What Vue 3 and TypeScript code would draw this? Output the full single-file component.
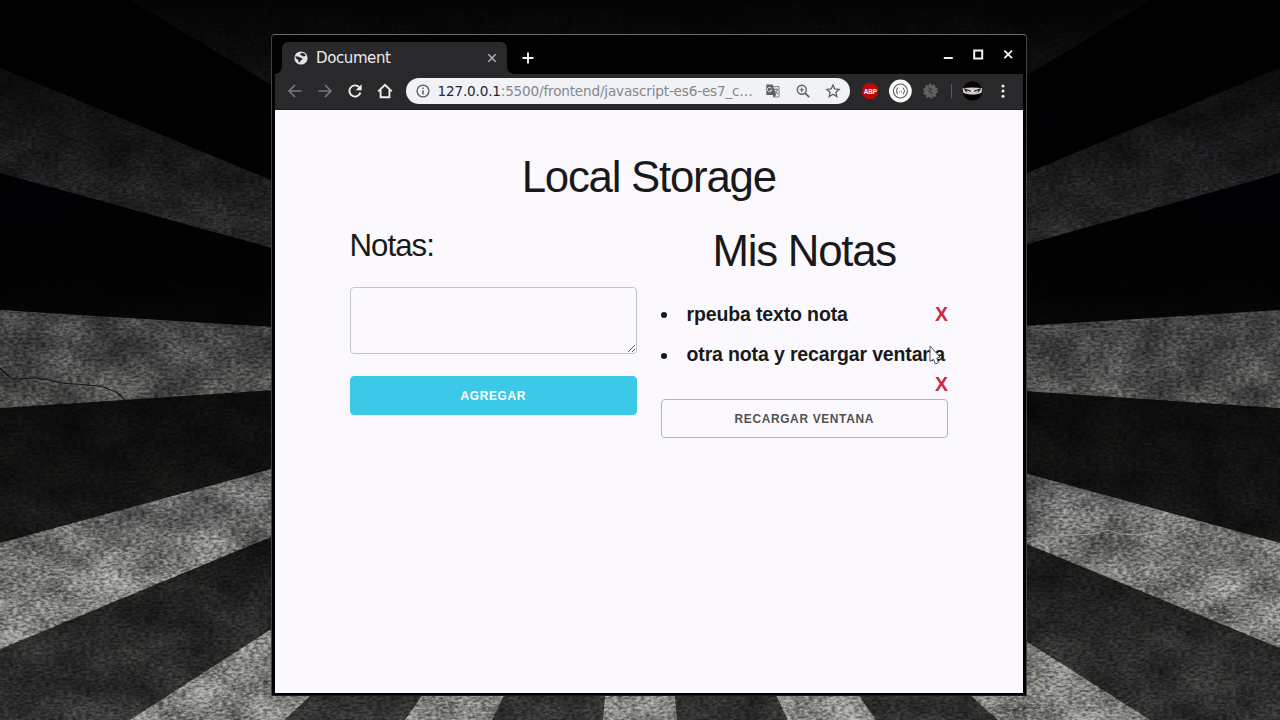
<script setup lang="ts">
import { ref } from 'vue'

interface Note {
  id: number
  text: string
}

const notes = ref<Note[]>([
  { id: 1, text: 'rpeuba texto nota' },
  { id: 2, text: 'otra nota y recargar ventana' },
])
const draft = ref('')

function addNote(): void {
  const text = draft.value.trim()
  if (!text) return
  notes.value.push({ id: Date.now(), text })
  draft.value = ''
}

function removeNote(id: number): void {
  notes.value = notes.value.filter((n) => n.id !== id)
}

const lightRays: string[] = [
  '130,0 290,96 1010,86 1150,0',
  '0,68 290,188 290,253 0,173',
  '0,310 290,328 290,389 0,408',
  '0,543 290,464 290,529 0,649',
  '130,720 290,617 320,687 284,720',
  '405,720 428,687 508,687 492,720',
  '603,720 606,687 674,687 677,720',
  '788,720 772,687 853,687 876,720',
  '998,720 961,687 1010,631 1150,720',
  '1280,68 1010,180 1010,249 1280,173',
  '1280,310 1010,327 1010,390 1280,408',
  '1280,543 1010,469 1010,537 1280,648',
]
</script>

<template>
  <div class="desktop">
    <svg class="wallpaper" width="1280" height="720" viewBox="0 0 1280 720">
      <defs>
        <linearGradient id="light" gradientUnits="userSpaceOnUse" x1="0" y1="0" x2="0" y2="720">
          <stop offset="0" stop-color="#030304" />
          <stop offset="0.12" stop-color="#0e0e10" />
          <stop offset="0.25" stop-color="#1c1c1e" />
          <stop offset="0.34" stop-color="#29292b" />
          <stop offset="0.46" stop-color="#424242" />
          <stop offset="0.56" stop-color="#4e4e4c" />
          <stop offset="0.7" stop-color="#666665" />
          <stop offset="0.85" stop-color="#7f7f7b" />
          <stop offset="1" stop-color="#81817c" />
        </linearGradient>
        <linearGradient id="dark" gradientUnits="userSpaceOnUse" x1="0" y1="0" x2="0" y2="720">
          <stop offset="0" stop-color="#000000" />
          <stop offset="0.38" stop-color="#010103" />
          <stop offset="0.6" stop-color="#0e0e0d" />
          <stop offset="0.75" stop-color="#161615" />
          <stop offset="0.88" stop-color="#272726" />
          <stop offset="1" stop-color="#313130" />
        </linearGradient>
        <filter id="grain" x="0" y="0" width="100%" height="100%" color-interpolation-filters="sRGB">
          <feTurbulence type="fractalNoise" baseFrequency="0.22 0.42" numOctaves="3" seed="4" />
          <feColorMatrix values="1.6 0 0 0 -0.3  1.6 0 0 0 -0.3  1.6 0 0 0 -0.3  0 0 0 0 1" />
        </filter>
        <filter id="stains" x="0" y="0" width="100%" height="100%" color-interpolation-filters="sRGB">
          <feTurbulence type="fractalNoise" baseFrequency="0.022 0.03" numOctaves="5" seed="11" />
          <feColorMatrix values="1.4 0 0 0 -0.2  1.4 0 0 0 -0.2  1.4 0 0 0 -0.2  0 0 0 0 1" />
        </filter>
      </defs>
      <rect width="1280" height="720" fill="url(#dark)" />
      <polygon v-for="(ray, i) in lightRays" :key="i" :points="ray" fill="url(#light)" />
      <rect width="1280" height="720" filter="url(#grain)" class="blend grain" />
      <rect width="1280" height="720" filter="url(#stains)" class="blend stains" />
      <path d="M0 368 L12 379 L40 378 L62 383 L100 386 L116 392 L125 400 L142 408 L156 423 L180 430 L212 427" class="crack" />
      <path d="M80 520 L94 533 L112 544 L128 552" class="crack faint" />
      <path d="M1027 542 L1040 537 L1092 534 L1108 530 L1120 534 L1142 535 L1164 529" class="vein" />
      <path d="M1032 329 L1050 331 L1062 329 L1074 332 L1086 329 L1120 329" class="vein soft" />
    </svg>

    <div class="window">
      <header class="tabstrip">
        <div class="tab">
          <svg class="globe" width="14" height="14" viewBox="0 0 14 14">
            <circle cx="7" cy="7" r="6.6" fill="#e4e5e8" />
            <path d="M1.5 5.2 C3 5.4 4.4 5.4 5.6 6.2 C7 7 8.6 6.6 8.4 8 C8.2 9.2 6.6 8.8 6.4 10 C6.2 11 5.4 11.4 4.6 11.6 C4.4 10.4 4.8 9.4 3.6 8.6 C2.4 7.9 1.3 7 1.5 5.2Z M7.6 1.8 C9.4 1.8 11 2.8 11.8 4.4 C10.8 5.2 9.6 5.8 8.6 5 C7.6 4.3 6.2 4.6 6 3.6 C5.9 2.8 7.2 2.9 7.6 1.8Z" fill="#29292d" />
          </svg>
          <span class="tab-title">Document</span>
          <svg class="tab-close" width="10" height="10" viewBox="0 0 10 10">
            <path d="M1.3 1.3 L8.7 8.7 M8.7 1.3 L1.3 8.7" stroke="#b5b5b7" stroke-width="1.4" />
          </svg>
        </div>
        <svg class="new-tab" width="12" height="12" viewBox="0 0 12 12">
          <path d="M6 .5 V11.5 M.5 6 H11.5" stroke="#f4f4f4" stroke-width="1.9" />
        </svg>
        <div class="controls">
          <svg width="30" height="20" viewBox="0 0 30 20"><path d="M10.8 15 H19.8" stroke="#f2f2f2" stroke-width="2" /></svg>
          <svg width="30" height="20" viewBox="0 0 30 20"><rect x="11.2" y="7.5" width="8" height="8" fill="none" stroke="#f2f2f2" stroke-width="2" /></svg>
          <svg width="30" height="20" viewBox="0 0 30 20"><path d="M11.4 7.6 L19 15.2 M19 7.6 L11.4 15.2" stroke="#f2f2f2" stroke-width="1.9" /></svg>
        </div>
      </header>

      <nav class="toolbar">
        <svg class="cell" viewBox="0 0 30 30"><path d="M21.5 15 H9.2 M15 9 L9 15 L15 21" fill="none" stroke="#77777a" stroke-width="1.7" /></svg>
        <svg class="cell" viewBox="0 0 30 30"><path d="M8.5 15 H20.8 M15 9 L21 15 L15 21" fill="none" stroke="#77777a" stroke-width="1.7" /></svg>
        <svg class="cell" viewBox="0 0 30 30">
          <path d="M19.2 11.2 A5.6 5.6 0 1 0 20.4 16.6" fill="none" stroke="#efeff0" stroke-width="1.9" />
          <path d="M21.6 8.3 V14.2 H15.7Z" fill="#efeff0" />
        </svg>
        <svg class="cell" viewBox="0 0 30 30"><path d="M8.2 15.4 L15 8.8 L21.8 15.4 M10.6 14 V21.3 H19.4 V14" fill="none" stroke="#efeff0" stroke-width="1.9" /></svg>

        <div class="omnibox">
          <svg class="info" width="14" height="14" viewBox="0 0 14 14">
            <circle cx="7" cy="7" r="5.9" fill="none" stroke="#5c5f63" stroke-width="1.4" />
            <path d="M7 6.2 V10.4 M7 3.6 V5.1" stroke="#5c5f63" stroke-width="1.5" />
          </svg>
          <span class="url"><b>127.0.0.1</b>:5500/frontend/javascript-es6-es7_c…</span>
          <svg class="action" viewBox="0 0 30 26">
            <path d="M14 8.6 H21 V19 H15.5" fill="#eceef0" stroke="#808388" stroke-width="1" />
            <path d="M8.3 6.6 H14.5 L18 17 H8.3Z" fill="#5c5f64" />
            <path d="M13.5 10.2 A2.3 2.3 0 1 0 13.8 12.2 H11.7" fill="none" stroke="#e4e6e8" stroke-width="1" />
            <path d="M15.8 11.4 H20.2 M18 10.3 V11.4 M19.4 11.6 C19 13.7 18 14.9 16.8 15.8 M16.6 12.5 C17.3 14 18.5 15.3 20 16" fill="none" stroke="#66696e" stroke-width=".9" />
            <path d="M15 17 H18 L15.7 19.7Z" fill="#55585c" />
          </svg>
          <svg class="action" viewBox="0 0 30 26">
            <circle cx="13.8" cy="11.8" r="4.5" fill="none" stroke="#5c5f64" stroke-width="1.4" />
            <path d="M17.2 15.2 L21.2 19.2" stroke="#5c5f64" stroke-width="1.8" />
            <path d="M13.8 9.6 V14 M11.6 11.8 H16" stroke="#5c5f64" stroke-width="1.1" />
          </svg>
          <svg class="action" viewBox="0 0 30 26">
            <path d="M15 7 L16.8 11 L21.1 11.4 L17.9 14.3 L18.8 18.6 L15 16.3 L11.2 18.6 L12.1 14.3 L8.9 11.4 L13.2 11Z" fill="none" stroke="#5c5f64" stroke-width="1.3" />
          </svg>
        </div>

        <svg class="cell" viewBox="0 0 30 30">
          <path d="M11.8 7.2 H18.6 L23.1 11.8 V18.4 L18.6 23 H11.8 L7.2 18.4 V11.8Z" fill="#b9080e" />
          <text x="15.4" y="18" text-anchor="middle" class="abp" textLength="13.4" lengthAdjust="spacingAndGlyphs">ABP</text>
        </svg>
        <svg class="cell" viewBox="0 0 30 30">
          <circle cx="15.4" cy="15" r="11.4" fill="#fbfbfb" />
          <circle cx="15.4" cy="15" r="7" fill="none" stroke="#55585a" stroke-width="1.1" />
          <path d="M13 11.8 C11.3 11.8 12.7 14.4 11 15 C12.7 15.6 11.3 18.2 13 18.2 M17.8 11.8 C19.5 11.8 18.1 14.4 19.8 15 C18.1 15.6 19.5 18.2 17.8 18.2" fill="none" stroke="#44474a" stroke-width="1" />
          <path d="M13.8 15.8 H14.8 M16 15.8 H17" stroke="#55585a" stroke-width="1" />
        </svg>
        <svg class="cell" viewBox="0 0 30 30">
          <circle cx="15.5" cy="15" r="6.2" fill="#626264" stroke="#626264" stroke-width="2.6" stroke-dasharray="2 1.9" />
          <circle cx="15.5" cy="15" r="5.4" fill="#626264" />
          <path d="M13.2 11.8 L16.8 13.2 L14 15.2 L17.6 18" fill="none" stroke="#3c3c3e" stroke-width="1.1" />
        </svg>
        <span class="divider"></span>
        <svg class="cell" viewBox="0 0 30 30">
          <circle cx="15.4" cy="15" r="9.8" fill="#030303" />
          <path d="M5.8 12.1 C12 11.2 19 11.2 25 12.1 L24.6 16.5 C21 19.3 10 19.3 6.2 16.5Z" fill="#d8d0ca" />
          <path d="M6.5 12 L14 14.8 C13 17 8.7 16.6 8 14.4Z M24.3 12 L16.8 14.8 C17.8 17 22.1 16.6 22.8 14.4Z" fill="#191716" />
          <path d="M9.5 14.9 L12.4 15.7 M21.3 14.9 L18.4 15.7" stroke="#ffffff" stroke-width="1" />
        </svg>
        <svg class="cell" viewBox="0 0 30 30">
          <circle cx="16" cy="10" r="1.5" fill="#eeeeee" />
          <circle cx="16" cy="15.1" r="1.5" fill="#eeeeee" />
          <circle cx="16" cy="20.2" r="1.5" fill="#eeeeee" />
        </svg>
      </nav>

      <main class="page">
        <h1 class="title">Local Storage</h1>
        <div class="columns">
          <form class="column" @submit.prevent="addNote">
            <label class="label" for="note">Notas:</label>
            <textarea id="note" v-model="draft" class="input"></textarea>
            <button class="button primary" type="submit">AGREGAR</button>
          </form>
          <section class="column">
            <h2 class="title list-title">Mis Notas</h2>
            <ul class="notes">
              <li v-for="note in notes" :key="note.id" class="note">
                <span class="bullet"></span>
                <span class="note-text">{{ note.text }}</span>
                <a class="remove" @click="removeNote(note.id)">X</a>
              </li>
            </ul>
            <button class="button" type="button">RECARGAR VENTANA</button>
          </section>
        </div>
      </main>
    </div>

    <svg class="cursor" width="12" height="22" viewBox="0 0 12 22">
      <path d="M1 1 V16.4 L4.4 14.2 L6.4 19 L9.4 17.8 L7.8 13.2 L11 12Z" fill="#fbfafc" stroke="#555558" stroke-width="1" stroke-linejoin="round" />
    </svg>
  </div>
</template>

<style>
html,
body {
  margin: 0;
  background: #000;
  overflow: hidden;
}
</style>

<style scoped>
.desktop {
  position: relative;
  width: 1280px;
  height: 720px;
  box-sizing: border-box;
  padding: 34px 0 0 271px;
  overflow: hidden;
  font-family: 'Liberation Sans', Arial, sans-serif;
}
.wallpaper {
  position: absolute;
  inset: 0;
  isolation: isolate;
}
.blend {
  mix-blend-mode: overlay;
}
.grain {
  opacity: 0.42;
}
.stains {
  opacity: 0.35;
}
.crack {
  fill: none;
  stroke: #0b0b0b;
  stroke-width: 1.2;
  opacity: 0.85;
}
.faint {
  stroke: #4a443d;
  opacity: 0.6;
}
.vein {
  fill: none;
  stroke: #a0a09b;
  stroke-width: 1.1;
  opacity: 0.85;
}
.soft {
  stroke: #686865;
}
.window {
  position: relative;
  box-sizing: border-box;
  width: 756px;
  height: 662px;
  padding: 0 3px 2px;
  border: 1px solid #424244;
  border-top-color: #6c6c6f;
  border-bottom-color: #1b1b1b;
  border-radius: 4px 4px 2px 2px;
  background: #000;
  display: flex;
  flex-direction: column;
}
.tabstrip {
  height: 39px;
  display: flex;
  align-items: flex-start;
}
.tab {
  position: relative;
  box-sizing: border-box;
  width: 225px;
  height: 32px;
  margin: 7px 0 0 7px;
  padding: 0 10px 0 12px;
  border-radius: 6px 6px 0 0;
  background: #29292c;
  display: flex;
  align-items: center;
}
.tab::before,
.tab::after {
  content: '';
  position: absolute;
  bottom: 0;
  width: 7px;
  height: 7px;
}
.tab::before {
  left: -7px;
  background: radial-gradient(circle at 0 0, transparent 6.5px, #29292c 7px);
}
.tab::after {
  right: -7px;
  background: radial-gradient(circle at 100% 0, transparent 6.5px, #29292c 7px);
}
.tab-title {
  flex: 1;
  margin-left: 8px;
  font: 15px/32px 'DejaVu Sans', sans-serif;
  letter-spacing: -0.4px;
  color: #ececed;
}
.new-tab {
  margin: 17px 0 0 14.5px;
}
.controls {
  display: flex;
  margin: 8px 0 0 auto;
}
.toolbar {
  height: 36px;
  box-sizing: border-box;
  padding: 0 5px 1px;
  background: #29292c;
  border-bottom: 1px solid #1c1c1e;
  display: flex;
  align-items: center;
}
.cell {
  width: 30px;
  height: 30px;
  flex: none;
}
.omnibox {
  box-sizing: border-box;
  width: 444px;
  height: 26px;
  margin: 0 5px 0 6px;
  padding: 0 2px 0 10px;
  border-radius: 13px;
  background: #f0f2f5;
  display: flex;
  align-items: center;
}
.info {
  flex: none;
}
.url {
  flex: 1;
  margin-left: 7.5px;
  padding-top: 1px;
  font: 13.6px/25px 'DejaVu Sans', sans-serif;
  letter-spacing: -0.18px;
  color: #85878b;
  white-space: nowrap;
}
.url b {
  font-weight: 400;
  color: #28282b;
}
.action {
  width: 30px;
  height: 26px;
  flex: none;
}
.abp {
  font: 700 8px 'Liberation Sans', sans-serif;
  fill: #fff;
}
.divider {
  width: 1px;
  height: 14px;
  margin: 0 5px 0 6px;
  background: #58585a;
}
.page {
  flex: 1;
  background: #fbf9fd;
  padding: 40.5px 75px 0 74.5px;
  color: #19191c;
}
.title {
  margin: 0;
  font-size: 43.8px;
  font-weight: 400;
  line-height: 52.5px;
  letter-spacing: -1.25px;
  text-align: center;
}
.columns {
  display: flex;
  gap: 23.5px;
  margin-top: 22.5px;
}
.column {
  width: 287.5px;
  display: flex;
  flex-direction: column;
}
.label {
  padding-top: 0.5px;
  font-size: 31.2px;
  line-height: 40.5px;
  letter-spacing: -0.95px;
}
.input {
  box-sizing: border-box;
  height: 67px;
  margin: 20.5px 0 22px;
  padding: 6px 10px;
  border: 1px solid #c4c4c8;
  border-radius: 4px;
  background: transparent;
  outline: none;
  resize: vertical;
}
.button {
  box-sizing: border-box;
  height: 39px;
  padding: 1px 0 0;
  border: 1px solid #b5b5b9;
  border-radius: 4px;
  background: transparent;
  color: #505053;
  font: 700 11.9px/36px 'Liberation Sans', sans-serif;
  letter-spacing: 0.68px;
  text-align: center;
}
.primary {
  border-color: #3cc9e8;
  background: #3cc9e8;
  color: #fff;
}
.list-title {
  margin-top: -1px;
}
.notes {
  list-style: none;
  margin: 21.5px 0 0;
  padding: 0;
  display: flex;
  flex-direction: column;
  gap: 10.5px;
}
.note {
  display: flex;
  flex-wrap: wrap;
  align-items: center;
  font-size: 19.5px;
  font-weight: 700;
  line-height: 30px;
}
.bullet {
  width: 6px;
  height: 6px;
  margin: 3px 20px 0 0;
  border-radius: 50%;
  background: #19191c;
}
.note-text {
  white-space: nowrap;
  letter-spacing: -0.14px;
}
.remove {
  margin-left: auto;
  color: #cb2947;
  cursor: pointer;
}
.cursor {
  position: absolute;
  left: 929px;
  top: 345px;
}
</style>
